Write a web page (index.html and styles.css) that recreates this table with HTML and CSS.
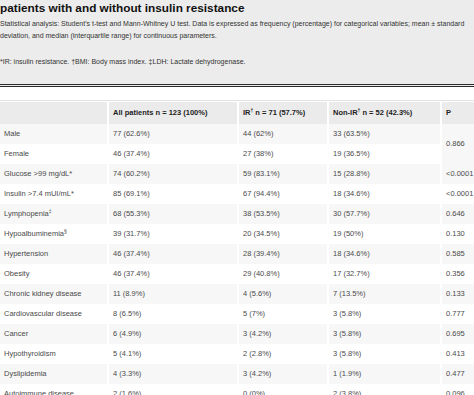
FILE: index.html
```html
<!DOCTYPE html>
<html lang="en">
<head>
  <meta charset="UTF-8">
  <title>Patients with and without insulin resistance</title>
  <link rel="stylesheet" href="styles.css">
</head>
<body>
  <div class="caption">
    <h2>patients with and without insulin resistance</h2>
    <p class="notes">Statistical analysis: Student's t-test and Mann-Whitney U test. Data is expressed as frequency (percentage) for categorical variables; mean ± standard<br>deviation, and median (interquartile range) for continuous parameters.</p>
    <p class="foot">*IR: insulin resistance. †BMI: Body mass index. ‡LDH: Lactate dehydrogenase.</p>
  </div>

  <div class="table-wrap">
    <table>
      <colgroup>
        <col class="c-label">
        <col class="c-all">
        <col class="c-ir">
        <col class="c-nonir">
        <col class="c-p">
      </colgroup>
      <thead>
        <tr>
          <th></th>
          <th>All patients n = 123 (100%)</th>
          <th>IR<sup>†</sup> n = 71 (57.7%)</th>
          <th>Non-IR<sup>†</sup> n = 52 (42.3%)</th>
          <th>P</th>
        </tr>
      </thead>
      <tbody>
        <tr><td>Male</td><td>77 (62.6%)</td><td>44 (62%)</td><td>33 (63.5%)</td><td rowspan="2">0.866</td></tr>
        <tr><td>Female</td><td>46 (37.4%)</td><td>27 (38%)</td><td>19 (36.5%)</td></tr>
        <tr><td>Glucose &gt;99 mg/dL*</td><td>74 (60.2%)</td><td>59 (83.1%)</td><td>15 (28.8%)</td><td>&lt;0.0001</td></tr>
        <tr><td>Insulin &gt;7.4 mUI/mL*</td><td>85 (69.1%)</td><td>67 (94.4%)</td><td>18 (34.6%)</td><td>&lt;0.0001</td></tr>
        <tr><td>Lymphopenia<sup>‡</sup></td><td>68 (55.3%)</td><td>38 (53.5%)</td><td>30 (57.7%)</td><td>0.646</td></tr>
        <tr><td>Hypoalbuminemia<sup>§</sup></td><td>39 (31.7%)</td><td>20 (34.5%)</td><td>19 (50%)</td><td>0.130</td></tr>
        <tr><td>Hypertension</td><td>46 (37.4%)</td><td>28 (39.4%)</td><td>18 (34.6%)</td><td>0.585</td></tr>
        <tr><td>Obesity</td><td>46 (37.4%)</td><td>29 (40.8%)</td><td>17 (32.7%)</td><td>0.356</td></tr>
        <tr><td>Chronic kidney disease</td><td>11 (8.9%)</td><td>4 (5.6%)</td><td>7 (13.5%)</td><td>0.133</td></tr>
        <tr><td>Cardiovascular disease</td><td>8 (6.5%)</td><td>5 (7%)</td><td>3 (5.8%)</td><td>0.777</td></tr>
        <tr><td>Cancer</td><td>6 (4.9%)</td><td>3 (4.2%)</td><td>3 (5.8%)</td><td>0.695</td></tr>
        <tr><td>Hypothyroidism</td><td>5 (4.1%)</td><td>2 (2.8%)</td><td>3 (5.8%)</td><td>0.413</td></tr>
        <tr><td>Dyslipidemia</td><td>4 (3.3%)</td><td>3 (4.2%)</td><td>1 (1.9%)</td><td>0.477</td></tr>
        <tr><td>Autoimmune disease</td><td>2 (1.6%)</td><td>0 (0%)</td><td>2 (3.8%)</td><td>0.096</td></tr>
      </tbody>
    </table>
  </div>
</body>
</html>
```

FILE: styles.css
```css
* {
  margin: 0;
  padding: 0;
  box-sizing: border-box;
}

body {
  font-family: 'Liberation Sans', Arial, sans-serif;
  background: #fff;
  color: #4a4a4a;
  overflow: hidden;
  width: 474px;
}

.caption {
  background-color: #ececec;
  height: 87px;
  padding-top: 1px;
  border-bottom: 3px double #2a2a2a;
  white-space: nowrap;
  overflow: hidden;
}

.caption h2 {
  font-size: 11.8px;
  line-height: 14px;
  font-weight: bold;
  color: #111;
}

.notes {
  margin-top: 3px;
  font-size: 7px;
  line-height: 12px;
  color: #333;
}

.foot {
  margin-top: 14px;
  font-size: 7px;
  line-height: 12px;
  color: #333;
}

.table-wrap {
  margin-top: 13px;
  border-top: 1px solid #e2e2e2;
  padding-top: 1px;
}

table {
  table-layout: fixed;
  width: 540px;
  border-collapse: separate;
  border-spacing: 2px 0;
  margin-left: -2px;
  font-size: 7.5px;
}

.c-label { width: 107px; }
.c-all { width: 128px; }
.c-ir { width: 88px; }
.c-nonir { width: 111px; }
.c-p { width: 100px; }

th {
  background-color: #ebebeb;
  color: #222;
  font-weight: bold;
  text-align: left;
  padding: 6px 4px;
  line-height: 10px;
  height: 22px;
}

td {
  padding: 5px 4px;
  line-height: 10px;
  height: 20px;
  white-space: nowrap;
  vertical-align: middle;
}

tbody tr:nth-child(odd) td {
  background-color: #f7f7f7;
}

sup {
  font-size: 5px;
  line-height: 0;
  vertical-align: 3px;
}
```
